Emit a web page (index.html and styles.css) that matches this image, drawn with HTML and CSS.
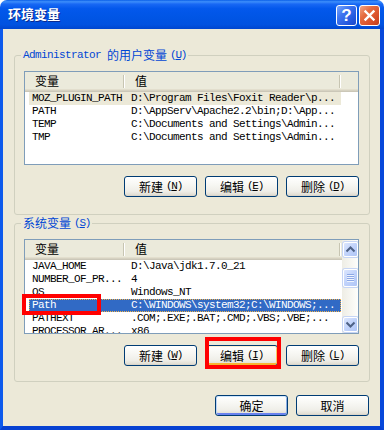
FILE: index.html
```html
<!DOCTYPE html>
<html lang="zh-CN">

<head>
    <meta charset="UTF-8">
    <title>环境变量</title>
    <link rel="stylesheet" href="styles.css">
</head>

<body>
    <div class="window">
        <div class="titlebar">
            <span class="title">环境变量</span>
            <div class="caption-buttons">
                <span class="cap-btn help">?</span>
                <span class="cap-btn close">
                    <svg width="19" height="19" viewBox="0 0 19 19">
                        <path d="M5.5 5.5 L13.5 13.5 M13.5 5.5 L5.5 13.5" stroke="#fff" stroke-width="2.4" stroke-linecap="square" />
                    </svg>
                </span>
            </div>
        </div>

        <div class="client">
            <!-- user variables -->
            <fieldset class="group">
                <legend><span class="en">Administrator </span>的用户变量<span class="acc">(<u>U</u>)</span></legend>
                <div class="listview">
                    <div class="list-main">
                        <div class="list-header">
                            <span class="hcol hcol-name">变量</span>
                            <span class="hcol hcol-value">值</span>
                        </div>
                        <div class="row sel-inactive"><span class="cell name">MOZ_PLUGIN_PATH</span><span class="cell value">D:\Program Files\Foxit Reader\p...</span></div>
                        <div class="row"><span class="cell name">PATH</span><span class="cell value">D:\AppServ\Apache2.2\bin;D:\App...</span></div>
                        <div class="row"><span class="cell name">TEMP</span><span class="cell value">C:\Documents and Settings\Admin...</span></div>
                        <div class="row"><span class="cell name">TMP</span><span class="cell value">C:\Documents and Settings\Admin...</span></div>
                    </div>
                </div>
                <div class="btn-row">
                    <button class="btn">新建<span class="acc">(<u>N</u>)</span></button>
                    <button class="btn">编辑<span class="acc">(<u>E</u>)</span></button>
                    <button class="btn">删除<span class="acc">(<u>D</u>)</span></button>
                </div>
            </fieldset>

            <!-- system variables -->
            <fieldset class="group system">
                <legend>系统变量<span class="acc">(<u>S</u>)</span></legend>
                <div class="listview tall">
                    <div class="list-main">
                        <div class="list-header">
                            <span class="hcol hcol-name">变量</span>
                            <span class="hcol hcol-value">值</span>
                        </div>
                        <div class="row"><span class="cell name">JAVA_HOME</span><span class="cell value">D:\Java\jdk1.7.0_21</span></div>
                        <div class="row"><span class="cell name">NUMBER_OF_PR...</span><span class="cell value">4</span></div>
                        <div class="row"><span class="cell name">OS</span><span class="cell value">Windows_NT</span></div>
                        <div class="row sel"><span class="cell name">Path</span><span class="cell value">C:\WINDOWS\system32;C:\WINDOWS;...</span></div>
                        <div class="row"><span class="cell name">PATHEXT</span><span class="cell value">.COM;.EXE;.BAT;.CMD;.VBS;.VBE;...</span></div>
                        <div class="row"><span class="cell name">PROCESSOR_AR...</span><span class="cell value">x86</span></div>
                    </div>
                    <div class="vscroll">
                        <span class="sb-btn">
                            <svg width="15" height="15" viewBox="0 0 15 15">
                                <path d="M3.5 9.5 L7.5 5.5 L11.5 9.5" fill="none" stroke="#4D6185" stroke-width="2" />
                            </svg>
                        </span>
                        <span class="sb-thumb">
                            <svg width="15" height="18" viewBox="0 0 15 18">
                                <rect x="4" y="5" width="7" height="1" fill="#8DA8E6" />
                                <rect x="4" y="7" width="7" height="1" fill="#8DA8E6" />
                                <rect x="4" y="9" width="7" height="1" fill="#8DA8E6" />
                                <rect x="4" y="11" width="7" height="1" fill="#8DA8E6" />
                                <rect x="4" y="6" width="7" height="1" fill="#EEF4FE" />
                                <rect x="4" y="8" width="7" height="1" fill="#EEF4FE" />
                                <rect x="4" y="10" width="7" height="1" fill="#EEF4FE" />
                                <rect x="4" y="12" width="7" height="1" fill="#EEF4FE" />
                            </svg>
                        </span>
                        <span class="sb-track"></span>
                        <span class="sb-btn">
                            <svg width="15" height="15" viewBox="0 0 15 15">
                                <path d="M3.5 5.5 L7.5 9.5 L11.5 5.5" fill="none" stroke="#4D6185" stroke-width="2" />
                            </svg>
                        </span>
                    </div>
                </div>
                <div class="btn-row">
                    <button class="btn">新建<span class="acc">(<u>W</u>)</span></button>
                    <button class="btn hot">编辑<span class="acc">(<u>I</u>)</span></button>
                    <button class="btn">删除<span class="acc">(<u>L</u>)</span></button>
                </div>
            </fieldset>

            <div class="dialog-buttons">
                <button class="btn default">确定</button>
                <button class="btn">取消</button>
            </div>
        </div>

        <!-- annotation boxes -->
        <div class="mark mark-path"></div>
        <div class="mark mark-edit"></div>
    </div>
</body>

</html>
```

FILE: styles.css
```css
* {
    box-sizing: border-box;
}

body {
    margin: 0;
    background: #fff;
}

.window {
    position: relative;
    width: 384px;
    height: 430px;
    display: flex;
    flex-direction: column;
    font-family: "Noto Sans CJK SC", sans-serif;
    font-size: 12px;
    color: #000;
}

/* title bar */
.titlebar {
    height: 29px;
    flex: none;
    display: flex;
    justify-content: space-between;
    align-items: flex-start;
    padding: 0 4px 0 8px;
    border-radius: 7px 7px 0 0;
    background: linear-gradient(to bottom, #0A5FE8 0%, #3D8EFB 6%, #1868F4 14%, #0358EC 30%, #0055E5 60%, #0152E0 85%, #0046CF 100%);
}

.title {
    margin-top: 5px;
    font-size: 13px;
    font-weight: bold;
    line-height: 18px;
    color: #fff;
    text-shadow: 1px 1px 0 #0B2A8F;
}

.caption-buttons {
    display: flex;
    gap: 2px;
    margin-top: 5px;
}

.cap-btn {
    width: 21px;
    height: 21px;
    border: 1px solid #fff;
    border-radius: 3px;
    display: flex;
    align-items: center;
    justify-content: center;
}

.help {
    background: linear-gradient(135deg, #79A6FC 0%, #3F76F0 35%, #2457DD 75%, #1B47C9 100%);
    font-family: "Liberation Sans", sans-serif;
    font-weight: bold;
    font-size: 17px;
    line-height: 19px;
    color: #fff;
}

.close {
    background: linear-gradient(135deg, #F2A585 0%, #E56B3F 35%, #D9502A 70%, #C13E1B 100%);
}

/* client area */
.client {
    flex: 1;
    background: #ECE9D8;
    border-style: solid;
    border-color: #0851E4 #0748DA #0641D2 #0D5AEC;
    border-width: 0 4px 4px 3px;
}

.group {
    margin: 19px 10px 0 11px;
    padding: 9px 10px 17px 9px;
    border: 1px solid #D0D0BF;
    border-radius: 3px;
    min-inline-size: 0;
}

.group.system {
    margin-top: 1px;
    padding-bottom: 15px;
}

.group legend {
    height: 14px;
    margin-left: -3px;
    padding: 0 2px;
    display: flex;
    align-items: center;
    white-space: pre;
    line-height: 14px;
    color: #0046D5;
}

.en,
.row,
.acc {
    font-family: "Liberation Mono", monospace;
    font-size: 11px;
    letter-spacing: -0.6px;
}

.acc {
    margin-left: 3px;
    letter-spacing: -1.2px;
}

/* list view */
.listview {
    height: 94px;
    border: 1px solid #7F9DB9;
    background: #fff;
    display: flex;
    overflow: hidden;
}

.listview.tall {
    height: 95px;
}

.list-main {
    flex: 1;
    min-width: 0;
    overflow: hidden;
}

.list-header {
    display: flex;
    height: 20px;
    background: #EBEADB;
    box-shadow: inset 0 -1px #CBC7B8, inset 0 -2px #D6D2C2, inset 0 -3px #E2DECD;
}

.hcol {
    line-height: 17px;
    padding-left: 10px;
    background:
        linear-gradient(#C7C5B2, #C7C5B2) right 1px top 3px / 1px 13px no-repeat,
        linear-gradient(#fff, #fff) right 0 top 3px / 1px 13px no-repeat;
}

.hcol-name {
    width: 100px;
}

.hcol-value {
    width: 216px;
}

.row {
    display: flex;
    width: 312px;
    height: 13px;
    margin-left: 4px;
    line-height: 13px;
    white-space: nowrap;
}

.cell {
    overflow: hidden;
}

.cell.name {
    width: 95px;
    flex: none;
    padding-left: 3px;
}

.cell.value {
    flex: 1;
    padding-left: 7px;
}

.row.sel-inactive {
    background: #ECE9D8;
}

.row.sel {
    background: #316AC5;
    color: #fff;
    outline: 1px dotted #F0B24A;
    outline-offset: -1px;
}

/* scroll bar */
.vscroll {
    width: 16px;
    flex: none;
    display: flex;
    flex-direction: column;
    padding: 1px 0 1px 1px;
    background: linear-gradient(to right, #EEEDE5, #FEFEFB);
}

.sb-btn,
.sb-thumb {
    width: 15px;
    height: 15px;
    border: 1px solid #fff;
    border-radius: 2px;
    background: linear-gradient(135deg, #DCE6FD, #C1D3FB 50%, #B0C6F6);
    box-shadow: 0 0 0 1px #C6D5F5;
    display: flex;
    align-items: center;
    justify-content: center;
    flex: none;
}

.sb-btn svg,
.sb-thumb svg {
    margin: -1px;
}

.sb-btn:first-child {
    margin-top: 1px;
}

.sb-thumb {
    height: 18px;
    margin-top: 12px;
}

.sb-track {
    flex: 1;
}

/* buttons */
.btn-row {
    display: flex;
    justify-content: flex-end;
    gap: 8px;
    margin-top: 11px;
}

.btn {
    width: 73px;
    height: 21px;
    padding: 0;
    border: 1px solid #003C74;
    border-radius: 3px;
    background: linear-gradient(to bottom, #FFFFFF 0%, #F7F7F3 40%, #EFEEE8 75%, #E3E0D6 92%, #D6D0C5 100%);
    font-family: "Noto Sans CJK SC", sans-serif;
    font-size: 12px;
    line-height: 17px;
    color: #000;
    display: flex;
    align-items: center;
    justify-content: center;
}

.btn.hot {
    box-shadow: inset 0 1px #FFF0CF, inset 1px 0 #FDD889, inset -1px 0 #FBC761, inset 0 -2px #F8B330;
}

.btn.default {
    box-shadow: inset 0 1px #CEE7FF, inset 1px 0 #BCD4F6, inset -1px 0 #89ADE4, inset 0 -2px #6982EE;
}

.dialog-buttons {
    display: flex;
    justify-content: flex-end;
    gap: 8px;
    margin: 13px 11px 0 0;
}

/* red annotation boxes */
.mark {
    position: absolute;
    border: 4px solid #FF0000;
}

.mark-path {
    left: 22px;
    top: 294px;
    width: 79px;
    height: 21px;
}

.mark-edit {
    left: 205px;
    top: 337px;
    width: 76px;
    height: 32px;
}
```
